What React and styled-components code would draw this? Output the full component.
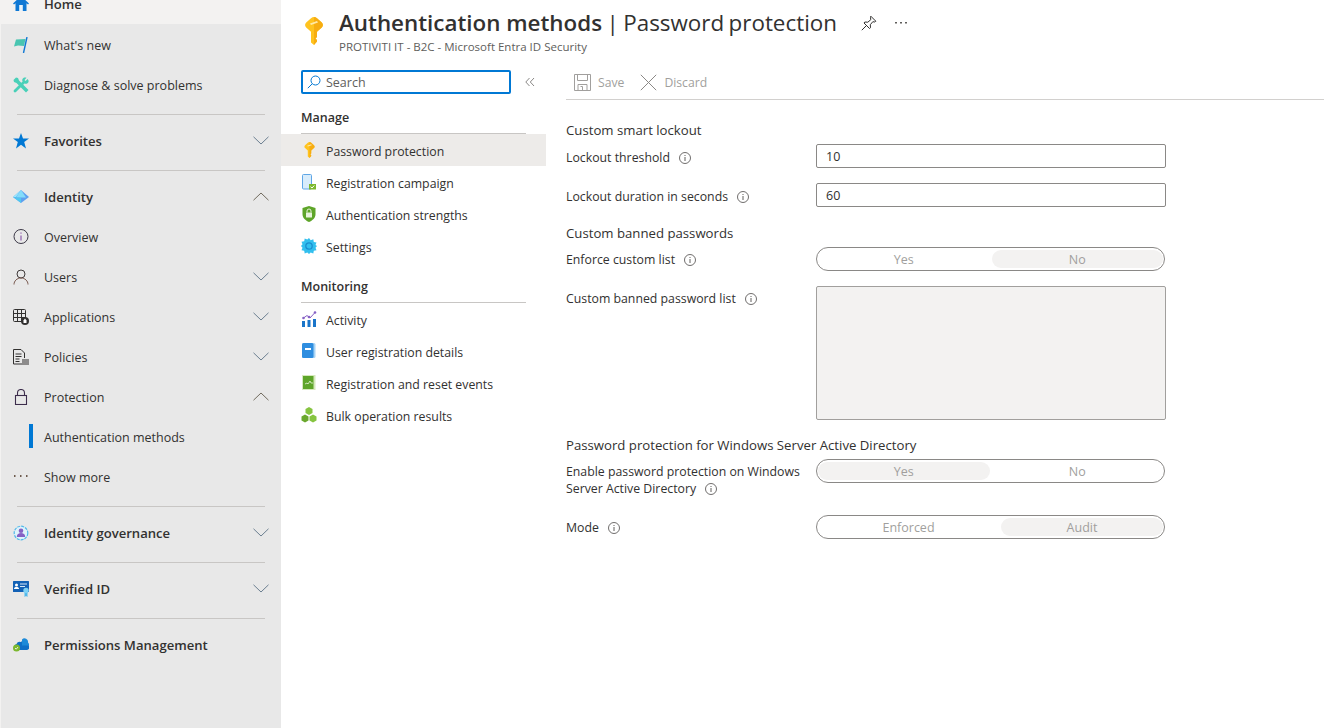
import styled, { createGlobalStyle } from "styled-components";

const GlobalStyle = createGlobalStyle`
  html, body {
    margin: 0;
    height: 100%;
    overflow: hidden;
    background: #fff;
  }
  body {
    font-family: "Open Sans", "Noto Sans", sans-serif;
    font-size: 12.5px;
    color: #323130;
  }
`;

const Page = styled.div`
  display: flex;
  width: 1324px;
  height: 728px;
  overflow: hidden;
`;

const Sidebar = styled.nav`
  flex: 0 0 280px;
  height: 728px;
  background: #e8e8e8;
  border-left: 1px solid #f3f2f1;
  overflow: hidden;
`;

// page is scrolled a bit, Home row is cut off at the top
const SideList = styled.div`
  margin-top: -16px;
`;

const SideRow = styled.div`
  display: flex;
  align-items: center;
  position: relative;
  height: 40px;
  margin-top: ${props => (props.$head ? "6px" : "0")};
  margin-bottom: ${props => (props.$home ? "1px" : "0")};
  background: ${props => (props.$home ? "#f3f2f1" : "transparent")};
  font-weight: ${props => (props.$bold ? 600 : 400)};
  font-size: ${props => (props.$bold ? "13.1px" : "12.5px")};
`;

const SideIcon = styled.span`
  display: flex;
  flex: 0 0 16px;
  width: 16px;
  height: 16px;
  margin-left: 12px;
  margin-right: 15px;
`;

const SideLabel = styled.span`
  flex: 1;
  white-space: nowrap;
`;

const SideChevron = styled.span`
  display: flex;
  margin-top: -2px;
  margin-right: 12px;
`;

const SubMarker = styled.span`
  position: absolute;
  left: 28px;
  top: 7px;
  width: 4px;
  height: 24px;
  background: #0078d4;
`;

const SideDivider = styled.div`
  height: 1px;
  margin: 9px 16px 0;
  background: #c8c6c4;
`;

const Main = styled.main`
  flex: 1;
  display: flex;
  flex-direction: column;
  min-width: 0;
`;

const Header = styled.header`
  display: flex;
  height: 62px;
  box-sizing: border-box;
  padding: 7px 0 0 24px;
`;

const HeaderIcon = styled.span`
  display: flex;
  width: 22px;
  height: 28px;
  margin-top: 10px;
  margin-right: 12px;
`;

const TitleRow = styled.div`
  display: flex;
  align-items: center;
  height: 32px;
`;

const Title = styled.h1`
  margin: 0;
  font-size: 22.4px;
  line-height: 32px;
  font-weight: 400;
  white-space: nowrap;
`;

const TitleStrong = styled.span`
  font-weight: 600;
`;

const TitleTail = styled.span`
  word-spacing: -1.4px;
`;

const Subtitle = styled.div`
  font-size: 11.5px;
  line-height: 16px;
  color: #605e5c;
`;

const PinButton = styled.span`
  display: flex;
  margin-left: 24px;
`;

const MoreButton = styled.span`
  display: flex;
  margin-left: 18px;
`;

const Body = styled.div`
  flex: 1;
  display: flex;
`;

const Menu = styled.div`
  flex: 0 0 265px;
`;

const SearchRow = styled.div`
  display: flex;
  align-items: center;
  margin: 8px 0 0 20px;
`;

const SearchBox = styled.div`
  display: flex;
  align-items: center;
  box-sizing: border-box;
  width: 210px;
  height: 24px;
  border: 2px solid #0078d4;
  border-radius: 2px;
  padding-left: 4px;
  color: #605e5c;
`;

const SearchText = styled.span`
  margin-left: 5px;
`;

const Collapse = styled.span`
  display: flex;
  margin-left: 14px;
`;

const MenuHeading = styled.div`
  margin: ${props => (props.$first ? "14px" : "15px")} 20px 0;
  padding-bottom: 6px;
  height: 19px;
  line-height: 19px;
  font-weight: 600;
  border-bottom: 1px solid #c8c6c4;
`;

const MenuRow = styled.div`
  display: flex;
  align-items: center;
  box-sizing: border-box;
  height: 32px;
  padding: 2px 0 0 20px;
  font-size: 12.3px;
  background: ${props => (props.$active ? "#edebe9" : "transparent")};
`;

const MenuIcon = styled.span`
  display: flex;
  justify-content: center;
  width: 16px;
  height: 16px;
  margin-top: -2px;
  margin-right: 9px;
`;

const Content = styled.section`
  flex: 1;
  min-width: 0;
  margin-left: 20px;
`;

const Toolbar = styled.div`
  display: flex;
  align-items: center;
  margin-top: 4px;
  height: 33px;
  padding-left: 8px;
  border-bottom: 1px solid #d2d0ce;
  font-size: 12.2px;
  color: #a19f9d;
`;

const ToolButton = styled.span`
  display: flex;
  align-items: center;
  gap: 7px;
  margin-right: 16px;
`;

const Form = styled.div`
  padding-top: 20px;
`;

const SectionTitle = styled.div`
  height: 20px;
  line-height: 20px;
  font-size: 13.2px;
  margin-top: ${props => props.$gap};
`;

const FieldRow = styled.div`
  display: grid;
  grid-template-columns: 250px 350px;
  margin-top: ${props => (props.$tight ? "4px" : "15px")};
`;

const FieldLabel = styled.div`
  padding-top: ${props => (props.$low ? "5px" : "4px")};
  padding-bottom: ${props => (props.$double ? "3px" : "0")};
  line-height: 17px;
  font-size: 12.3px;
`;

const InfoIcon = styled.svg`
  width: 14px;
  height: 14px;
  margin-left: 8px;
  vertical-align: -3px;
`;

const TextField = styled.div`
  box-sizing: border-box;
  height: 24px;
  line-height: 24px;
  padding-left: 9px;
  border: 1px solid #8a8886;
  border-radius: 2px;
`;

const TextArea = styled.div`
  height: 132px;
  background: #f3f2f1;
  border: 1px solid #a19f9d;
  border-radius: 2px;
`;

const Toggle = styled.div`
  display: grid;
  grid-template-columns: ${props => props.$columns};
  grid-template-rows: 18px;
  gap: 2px;
  box-sizing: border-box;
  width: 349px;
  height: 24px;
  padding: 2px 1px;
  border: 1px solid #8a8886;
  border-radius: 12px;
`;

const ToggleOption = styled.div`
  text-align: center;
  line-height: 19px;
  border-radius: 9px;
  color: #a19f9d;
  background: ${props => (props.$on ? "#f3f2f1" : "transparent")};
`;

const Down = () => (
  <svg width="16" height="9" viewBox="0 0 16 9" fill="none" stroke="#6b7f90" strokeWidth="1">
    <path d="M.5.800 8 8 15.500.800" />
  </svg>
);

const Up = () => (
  <svg width="16" height="9" viewBox="0 0 16 9" fill="none" stroke="#716b5e" strokeWidth="1">
    <path d="M.5 8.200 8 1l7.500 7.200" />
  </svg>
);

const Info = () => (
  <InfoIcon viewBox="0 0 14 14" fill="none" stroke="#605e5c">
    <circle cx="7" cy="7" r="5.500" strokeWidth=".9" />
    <path d="M7 6v4" strokeWidth="1" />
    <path d="M7 4v1" strokeWidth="1" />
  </InfoIcon>
);

const KeyIcon = ({ width, height }) => (
  <svg width={width} height={height} viewBox="0 0 18 28">
    <path d="M9 0c1 0 2 .5 3 1.200l4.800 4.300c1.500 1.400 1.500 3.500 0 5L12 14.800V20l-1.500 1.500L12 23v1.500L9 28l-3-2.500V14.800L1.200 10.500c-1.500-1.500-1.500-3.600 0-5L6 1.200C7 .5 8 0 9 0z" fill="#ffc31f" />
    <path d="M9 0c1 0 2 .5 3 1.200l4.800 4.300c1.500 1.400 1.500 3.500 0 5L12 14.800V20l-1.500 1.500L12 23v1.500L9 28V9z" fill="#f6a90f" opacity=".85" />
    <path d="M5 6.500 12 4l1 1.500-7 2.500z" fill="#ffe9a8" />
  </svg>
);

const Home = () => (
  <svg width="16" height="16" viewBox="0 0 16 16">
    <path d="M8 0 0 7.500 1 8.500l1.500-1.200V15h11V7.300L15 8.500l1-1z" fill="#0f78d4" />
    <rect x="6.200" y="9" width="3.600" height="6" fill="#e8f3fb" />
  </svg>
);

const WhatsNew = () => (
  <svg width="16" height="16" viewBox="0 0 16 16">
    <path d="M3 2.500 12.500 2 11 9 5 8.500 1 9.500z" fill="#49c5b1" />
    <path d="M14 0l-3.500 16" stroke="#0f78d4" strokeWidth="1.400" />
  </svg>
);

const Tools = () => (
  <svg width="16" height="16" viewBox="0 0 16 16" fill="#49d0b8">
    <path d="M.5 3 3 .5l2 .5 1 2.500 9.500 9.500-2.500 2.500L3.500 6 1 5z" />
    <path d="M15.500 3.500c-.2-.6-.5-1.200-.8-1.500L12.500 4 11.500 3l2-2.200C12 0 10.500.5 9.800 1.500c-.7 1-.7 2-.2 3L1 13c-.5.5-.5 1.500 0 2s1.500.5 2 0l8.500-8.500c1 .5 2 .5 3-.2 1-.7 1.300-1.800 1-2.800z" />
  </svg>
);

const Star = () => (
  <svg width="16" height="16" viewBox="0 0 16 16">
    <path d="M8 0l2 5.500h6l-4.800 3.600L13 15.500 8 11.700 3 15.500l1.800-6.400L0 5.500h6z" fill="#0078d4" />
  </svg>
);

const IdentityIcon = () => (
  <svg width="16" height="16" viewBox="0 0 16 16">
    <path d="M8 1 0 8l8 6 8-6z" fill="#5ea0ef" />
    <path d="M8 1 3 8.500h10z" fill="#83dcfa" />
    <path d="M0 8l8 6V9z" fill="#50c8f0" />
    <path d="M8 1 0 8h3z" fill="#9be8fc" />
  </svg>
);

const InfoLarge = () => (
  <svg width="16" height="16" viewBox="0 0 16 16" fill="none" stroke="#3d3a48">
    <circle cx="8" cy="7.500" r="7" strokeWidth="1" />
    <path d="M8 6.500v5M8 3.500v1.200" stroke="#7b3fa0" strokeWidth="1" />
  </svg>
);

const User = () => (
  <svg width="16" height="16" viewBox="0 0 16 16" fill="none" stroke="#3f3a3a" strokeWidth="1">
    <circle cx="8" cy="5" r="4" />
    <path d="M1 15.500c0-3.500 3-6.500 7-6.500s7 3 7 6.500" stroke="#7a5a50" />
  </svg>
);

const Apps = () => (
  <svg width="16" height="16" viewBox="0 0 16 16" fill="none" stroke="#323130" strokeWidth="1">
    <rect x=".500" y=".500" width="12" height="12" rx="1" />
    <path d="M4.500 1v11M8.500 1v11M1 4.500h11M1 8.500h11" />
    <circle cx="12" cy="12" r="4" fill="#323130" stroke="none" />
    <path d="M12 9.500l1.500 2V14h-3v-2.500z" fill="#fff" stroke="none" />
  </svg>
);

const Policies = () => (
  <svg width="16" height="16" viewBox="0 0 16 16" fill="none" stroke="#323130" strokeWidth="1">
    <path d="M9 15H.5V.500H8L11.500 4v5" />
    <path d="M2.500 5h6M2.500 7.500h6M2.500 10h4M2.500 12.500h4" />
    <path d="M9 11h7M9 13h7M9 15h7" />
  </svg>
);

const Lock = () => (
  <svg width="16" height="16" viewBox="0 0 16 16" fill="none" stroke="#3d2d4c" strokeWidth="1.100">
    <rect x="2.500" y="6.500" width="11" height="9" />
    <path d="M4.500 6.500V4a3.500 3.500 0 0 1 7 0v2.500" />
  </svg>
);

const Dots = () => (
  <svg width="16" height="16" viewBox="0 0 16 16" fill="#6d5a4d">
    <rect x="1" y="6" width="1.500" height="2" />
    <rect x="7" y="6" width="1.500" height="2" />
    <rect x="13" y="6" width="1.500" height="2" />
  </svg>
);

const Governance = () => (
  <svg width="16" height="16" viewBox="0 0 16 16">
    <circle cx="8" cy="8" r="6.800" fill="#dff3fb" stroke="#50b8ea" strokeWidth="1.200" strokeDasharray="3 1" />
    <circle cx="8" cy="5.800" r="2.300" fill="#8661c5" />
    <path d="M3.800 12c0-3 2-4 4.200-4s4.200 1 4.200 4z" fill="#8661c5" />
  </svg>
);

const VerifiedIcon = () => (
  <svg width="16" height="16" viewBox="0 0 16 16">
    <rect y="0" width="16" height="11" rx=".5" fill="#1261b5" />
    <circle cx="3.500" cy="4" r="1.500" fill="#fff" />
    <path d="M1 8c0-1.500 1-2 2.500-2S6 6.500 6 8z" fill="#fff" />
    <path d="M7 3h7M7 5.500h5" stroke="#d5e6f5" strokeWidth="1" />
    <path d="M11.500 11v5l1.500-1 1.500 1v-5z" fill="#50b8ea" />
    <circle cx="13" cy="9.500" r="2.700" fill="#7fd2f5" />
  </svg>
);

const CloudIcon = () => (
  <svg width="16" height="16" viewBox="0 0 16 16">
    <path d="M4 13a3 3 0 0 1-.5-5.900A3.500 3.500 0 0 1 8 5a4 4 0 0 1 7 2.500A3 3 0 0 1 14 13z" fill="#0f6fc6" />
    <path d="M9 2.500a3.500 3.500 0 0 1 6 3A3 3 0 0 1 16 8.500H9z" fill="#1d8ad8" />
    <circle cx="3.500" cy="11" r="3.500" fill="#7cb82f" />
    <path d="M2 11l1.200 1.200L5 10" stroke="#fff" strokeWidth=".8" fill="none" />
  </svg>
);

const Magnifier = () => (
  <svg width="14" height="14" viewBox="0 0 14 14" fill="none" stroke="#0078d4" strokeWidth="1">
    <circle cx="8.500" cy="5.500" r="4.500" />
    <path d="M5.200 8.800.8 13.200" />
  </svg>
);

const DoubleChevron = () => (
  <svg width="10" height="10" viewBox="0 0 10 10" fill="none" stroke="#8a8886" strokeWidth="1">
    <path d="M4.500 1 .8 5l3.700 4M9 1 5.300 5 9 9" />
  </svg>
);

const Pin = () => (
  <svg width="16" height="16" viewBox="0 0 16 16" fill="none" stroke="#323130" strokeWidth="1">
    <path d="M.8 15.200 5 11M9.800 1.200l5 5-1 .8-2-.3-2.500 3 .2 3-1 .8-5.500-5.500.8-1 3 .2 3-2.500-.3-2z" />
  </svg>
);

const More = () => (
  <svg width="12" height="4" viewBox="0 0 12 4" fill="#605e5c">
    <rect x="0" y="1" width="2" height="1.500" />
    <rect x="5" y="1" width="2" height="1.500" />
    <rect x="10" y="1" width="2" height="1.500" />
  </svg>
);

const SaveIcon = () => (
  <svg width="17" height="17" viewBox="0 0 17 17" fill="none" stroke="#a19f9d" strokeWidth="1">
    <path d="M.5.500h16v16H.5z" />
    <path d="M3.500 1v5.500h10V1M4 16.500v-6h9v6M6.500 12.500h2v4" />
  </svg>
);

const Close = () => (
  <svg width="17" height="17" viewBox="0 0 17 17" fill="none" stroke="#8a8886" strokeWidth="1">
    <path d="M.8.800l15.400 15.400M16.200.800.8 16.200" />
  </svg>
);

const PhoneCheck = () => (
  <svg width="16" height="16" viewBox="0 0 16 16">
    <rect x="1.500" y=".500" width="9" height="14.500" rx="1" fill="#d8ecfb" stroke="#5ea6e6" />
    <rect x="8" y="10" width="7" height="5.500" fill="#7cb82f" />
    <path d="M9.500 12.700l1.500 1.300 2.300-2.500" stroke="#fff" fill="none" />
  </svg>
);

const Shield = () => (
  <svg width="16" height="16" viewBox="0 0 16 16">
    <path d="M8 0l6.500 2v6c0 4-3 6.500-6.500 8C4.500 14.500 1.500 12 1.500 8V2z" fill="#5ea529" />
    <rect x="5" y="6.500" width="6" height="5" rx=".5" fill="#e8f4dc" />
    <path d="M6 6.500V5a2 2 0 0 1 4 0v1.500" fill="none" stroke="#e8f4dc" />
  </svg>
);

const Gear = () => (
  <svg width="16" height="16" viewBox="0 0 16 16">
    <path d="M8 0l1.700 2.200 2.600-1 .5 2.700 2.700.5-1 2.600L16 8l-1.500 1.700 1 2.600-2.700.5-.5 2.700-2.600-1L8 16l-1.700-1.500-2.600 1-.5-2.700-2.700-.5 1-2.600L0 8l1.500-1.700-1-2.600 2.700-.5.5-2.700 2.600 1z" fill="#32bfee" />
    <circle cx="8" cy="8" r="3.200" fill="none" stroke="#1a8fd0" strokeWidth="1.300" />
  </svg>
);

const Activity = () => (
  <svg width="16" height="16" viewBox="0 0 16 16">
    <path d="M1 10h3v6H1zM6.500 9h3v7h-3zM12 8h3v8h-3z" fill="#1a75c9" />
    <path d="M2.500 7 6 4.500 9 7l5-5.500" stroke="#8661c5" fill="none" />
    <circle cx="2.500" cy="7" r="1.300" fill="#8661c5" />
    <circle cx="8" cy="6" r="1.300" fill="#8661c5" />
    <circle cx="14" cy="1.500" r="1.300" fill="#8661c5" />
  </svg>
);

const Book = () => (
  <svg width="16" height="16" viewBox="0 0 16 16">
    <rect x="1" y="0" width="13.500" height="15" rx="1.500" fill="#a8d4f5" />
    <rect x="1" y="0" width="11.500" height="15" rx="1.500" fill="#2f8ee0" />
    <rect x="4" y="5" width="6" height="2" fill="#fff" />
  </svg>
);

const EventLog = () => (
  <svg width="16" height="16" viewBox="0 0 16 16">
    <rect x="1" y="0" width="13.500" height="15" fill="#d6e9bd" />
    <rect x="2" y="1" width="10.500" height="13" fill="#5ea529" />
    <path d="M4 9l2-1 1 1 2-3 1 2h2" stroke="#e8f4dc" fill="none" strokeWidth=".8" />
  </svg>
);

const Cubes = () => (
  <svg width="16" height="16" viewBox="0 0 16 16">
    <path d="M8 0l3.500 2v4L8 8 4.500 6V2z" fill="#86c440" />
    <path d="M4 7.500l3.500 2v4L4 15.500l-3.500-2v-4z" fill="#6aa82e" />
    <path d="M12 7.500l3.500 2v4L12 15.500l-3.500-2v-4z" fill="#86c440" />
  </svg>
);

const sideItems = [
  { label: "Home", icon: <Home />, home: true, bold: true },
  { label: "What's new", icon: <WhatsNew /> },
  { label: "Diagnose & solve problems", icon: <Tools /> },
  { divider: true },
  { label: "Favorites", icon: <Star />, bold: true, head: true, chevron: "down" },
  { divider: true },
  { label: "Identity", icon: <IdentityIcon />, bold: true, head: true, chevron: "up" },
  { label: "Overview", icon: <InfoLarge /> },
  { label: "Users", icon: <User />, chevron: "down" },
  { label: "Applications", icon: <Apps />, chevron: "down" },
  { label: "Policies", icon: <Policies />, chevron: "down" },
  { label: "Protection", icon: <Lock />, chevron: "up" },
  { label: "Authentication methods", sub: true },
  { label: "Show more", icon: <Dots /> },
  { divider: true },
  { label: "Identity governance", icon: <Governance />, bold: true, head: true, chevron: "down" },
  { divider: true },
  { label: "Verified ID", icon: <VerifiedIcon />, bold: true, head: true, chevron: "down" },
  { divider: true },
  { label: "Permissions Management", icon: <CloudIcon />, bold: true, head: true },
];

const manageItems = [
  { label: "Password protection", icon: <KeyIcon width={11} height={16} />, active: true },
  { label: "Registration campaign", icon: <PhoneCheck /> },
  { label: "Authentication strengths", icon: <Shield /> },
  { label: "Settings", icon: <Gear /> },
];

const monitoringItems = [
  { label: "Activity", icon: <Activity /> },
  { label: "User registration details", icon: <Book /> },
  { label: "Registration and reset events", icon: <EventLog /> },
  { label: "Bulk operation results", icon: <Cubes /> },
];

const App = () => {
  return (
    <Page>
      <GlobalStyle />
      <Sidebar>
        <SideList>
          {sideItems.map((item, i) =>
            item.divider ? (
              <SideDivider key={i} />
            ) : (
              <SideRow key={i} $home={item.home} $bold={item.bold} $head={item.head}>
                {item.sub && <SubMarker />}
                <SideIcon>{item.icon}</SideIcon>
                <SideLabel>{item.label}</SideLabel>
                {item.chevron && <SideChevron>{item.chevron === "up" ? <Up /> : <Down />}</SideChevron>}
              </SideRow>
            )
          )}
        </SideList>
      </Sidebar>

      <Main>
        <Header>
          <HeaderIcon><KeyIcon width={18} height={28} /></HeaderIcon>
          <div>
            <TitleRow>
              <Title><TitleStrong>Authentication methods</TitleStrong><TitleTail> | Password protection</TitleTail></Title>
              <PinButton><Pin /></PinButton>
              <MoreButton><More /></MoreButton>
            </TitleRow>
            <Subtitle>PROTIVITI IT - B2C - Microsoft Entra ID Security</Subtitle>
          </div>
        </Header>

        <Body>
          <Menu>
            <SearchRow>
              <SearchBox>
                <Magnifier />
                <SearchText>Search</SearchText>
              </SearchBox>
              <Collapse><DoubleChevron /></Collapse>
            </SearchRow>
            <MenuHeading $first>Manage</MenuHeading>
            {manageItems.map(item => (
              <MenuRow key={item.label} $active={item.active}>
                <MenuIcon>{item.icon}</MenuIcon>
                {item.label}
              </MenuRow>
            ))}
            <MenuHeading>Monitoring</MenuHeading>
            {monitoringItems.map(item => (
              <MenuRow key={item.label}>
                <MenuIcon>{item.icon}</MenuIcon>
                {item.label}
              </MenuRow>
            ))}
          </Menu>

          <Content>
            <Toolbar>
              <ToolButton><SaveIcon />Save</ToolButton>
              <ToolButton><Close />Discard</ToolButton>
            </Toolbar>
            <Form>
              <SectionTitle $gap="0">Custom smart lockout</SectionTitle>
              <FieldRow $tight>
                <FieldLabel $low>Lockout threshold<Info /></FieldLabel>
                <TextField>10</TextField>
              </FieldRow>
              <FieldRow>
                <FieldLabel $low>Lockout duration in seconds<Info /></FieldLabel>
                <TextField>60</TextField>
              </FieldRow>

              <SectionTitle $gap="16px">Custom banned passwords</SectionTitle>
              <FieldRow $tight>
                <FieldLabel>Enforce custom list<Info /></FieldLabel>
                <Toggle $columns="1fr 1fr">
                  <ToggleOption>Yes</ToggleOption>
                  <ToggleOption $on>No</ToggleOption>
                </Toggle>
              </FieldRow>
              <FieldRow>
                <FieldLabel>Custom banned password list<Info /></FieldLabel>
                <TextArea />
              </FieldRow>

              <SectionTitle $gap="15px">Password protection for Windows Server Active Directory</SectionTitle>
              <FieldRow $tight>
                <FieldLabel $double>Enable password protection on Windows<br />Server Active Directory<Info /></FieldLabel>
                <Toggle $columns="1fr 1fr">
                  <ToggleOption $on>Yes</ToggleOption>
                  <ToggleOption>No</ToggleOption>
                </Toggle>
              </FieldRow>
              <FieldRow>
                <FieldLabel>Mode<Info /></FieldLabel>
                <Toggle $columns="181px 162px">
                  <ToggleOption>Enforced</ToggleOption>
                  <ToggleOption $on>Audit</ToggleOption>
                </Toggle>
              </FieldRow>
            </Form>
          </Content>
        </Body>
      </Main>
    </Page>
  );
};

export default App;
